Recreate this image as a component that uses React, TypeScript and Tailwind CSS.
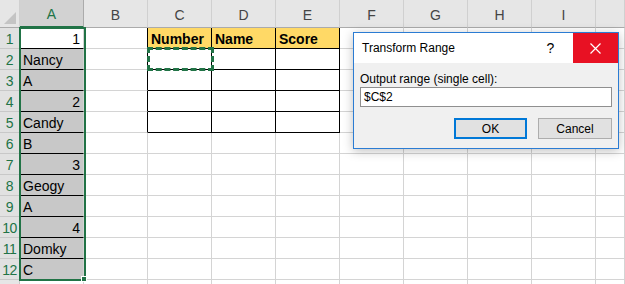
import { type FC } from "react";

type Cell = { text: string; num?: boolean };

const columns = ["A", "B", "C", "D", "E", "F", "G", "H", "I", ""];

const colA: Cell[] = [
  { text: "1", num: true },
  { text: "Nancy" },
  { text: "A" },
  { text: "2", num: true },
  { text: "Candy" },
  { text: "B" },
  { text: "3", num: true },
  { text: "Geogy" },
  { text: "A" },
  { text: "4", num: true },
  { text: "Domky" },
  { text: "C" },
];

const headers = ["Number", "Name", "Score"];

const rows = Array.from({ length: 13 }, (_, i) => i + 1);

const cellClass = (row: number, col: number) => {
  // col: 0 = A ... 9 = J
  const inTable = col >= 2 && col <= 4 && row <= 5;
  const leftOfTable = col === 1 && row <= 5;
  const inA = col === 0 && row <= 12;

  let cls = "flex items-center overflow-hidden whitespace-nowrap px-[3px] pt-[3px] border-r border-b";
  if (inTable) cls += " border-black";
  else if (inA) cls += " border-b-black border-r-[#d4d4d4]";
  else if (leftOfTable) cls += " border-r-black border-b-[#d4d4d4]";
  else cls += " border-[#d4d4d4]";

  if (inTable && row === 1) cls += " bg-[#ffd966] font-bold";
  else if (inA && row > 1) cls += " bg-[#c8c8c8]";
  else cls += " bg-white";
  return cls;
};

const App: FC = () => {
  return (
    <div className="relative w-[625px] h-[284px] overflow-hidden bg-white font-['Liberation_Sans',sans-serif] text-[14px] text-black">
      <div className="grid grid-cols-[20px_repeat(9,64px)_1fr] grid-rows-[28px_repeat(13,21px)]">
        {/* Corner */}
        <div className="relative bg-[#e6e6e6] border-r border-b border-r-[#d0d0d0] border-b-[#ababab]">
          <div className="absolute right-[3px] bottom-[3px] w-0 h-0 border-l-[12px] border-l-transparent border-b-[12px] border-b-[#c4c4c4]" />
        </div>
        {/* Column headers */}
        {columns.map((c, i) => (
          <div
            key={c + i}
            className={
              i === 0
                ? "flex items-center justify-center pt-[3px] bg-[#d2d2d2] text-[#217346] border-r border-r-[#ababab] border-b-2 border-b-[#217346]"
                : "flex items-center justify-center pt-[3px] bg-[#e6e6e6] text-[#444444] border-r border-r-[#d0d0d0] border-b border-b-[#ababab]"
            }
          >
            {c}
          </div>
        ))}

        {rows.map((r) => (
          <div key={r} className="contents">
            <div
              className={
                r <= 12
                  ? "flex items-center justify-center pt-[2px] bg-[#e1e1e1] text-[#217346] border-b border-r border-[#c8c8c8] tracking-[-0.5px]"
                  : "bg-[#e6e6e6] border-b border-r border-[#c8c8c8]"
              }
            >
              {r <= 12 ? r : null}
            </div>
            {columns.map((_, c) => {
              let content = "";
              let num = false;
              if (c === 0 && r <= 12) {
                content = colA[r - 1].text;
                num = !!colA[r - 1].num;
              }
              if (c >= 2 && c <= 4 && r === 1) content = headers[c - 2];
              return (
                <div key={c} className={cellClass(r, c) + (num ? " justify-end" : "")}>
                  {content}
                </div>
              );
            })}
          </div>
        ))}
      </div>

      {/* Selection around A1:A12 */}
      <div className="absolute left-[19px] top-[27px] w-[67px] h-[254px] border-2 border-[#217346]" />
      <div className="absolute left-[81px] top-[276px] w-[6px] h-[6px] bg-[#217346] border border-white" />

      {/* Copy marquee around C2 */}
      <div className="absolute left-[147px] top-[47px] w-[67px] h-[24px] border-[3px] border-dashed border-[#217346]" />

      {/* Transform Range dialog */}
      <div className="absolute left-[353px] top-[32px] w-[266px] h-[117px] flex flex-col border border-[#2b7cd3] bg-[#f0f0f0] shadow-[0_2px_10px_rgba(0,0,0,0.25)] text-[12px]">
        <div className="h-[30px] flex items-center bg-white">
          <span className="pl-[8px]">Transform Range</span>
          <span className="ml-auto w-[45px] flex justify-center text-[14px]">?</span>
          <div className="w-[45px] h-full flex items-center justify-center bg-[#e81123]">
            <svg width="11" height="11" viewBox="0 0 11 11">
              <path d="M0.5 0.5 L10.5 10.5 M10.5 0.5 L0.5 10.5" stroke="white" strokeWidth="1.2" />
            </svg>
          </div>
        </div>
        <div className="flex-1 flex flex-col px-[6px]">
          <div className="pt-[8px] h-[24px] leading-[16px]">Output range (single cell):</div>
          <div className="h-[20px] flex items-center pl-[3px] bg-white border border-[#8f8f8f]">$C$2</div>
          <div className="mt-[11px] flex justify-end gap-[11px]">
            <div className="w-[73px] h-[21px] flex items-center justify-center bg-[#e1e1e1] border-2 border-[#0078d7]">
              OK
            </div>
            <div className="w-[74px] h-[21px] flex items-center justify-center bg-[#e1e1e1] border border-[#adadad]">
              Cancel
            </div>
          </div>
        </div>
      </div>
    </div>
  );
};

export default App;
